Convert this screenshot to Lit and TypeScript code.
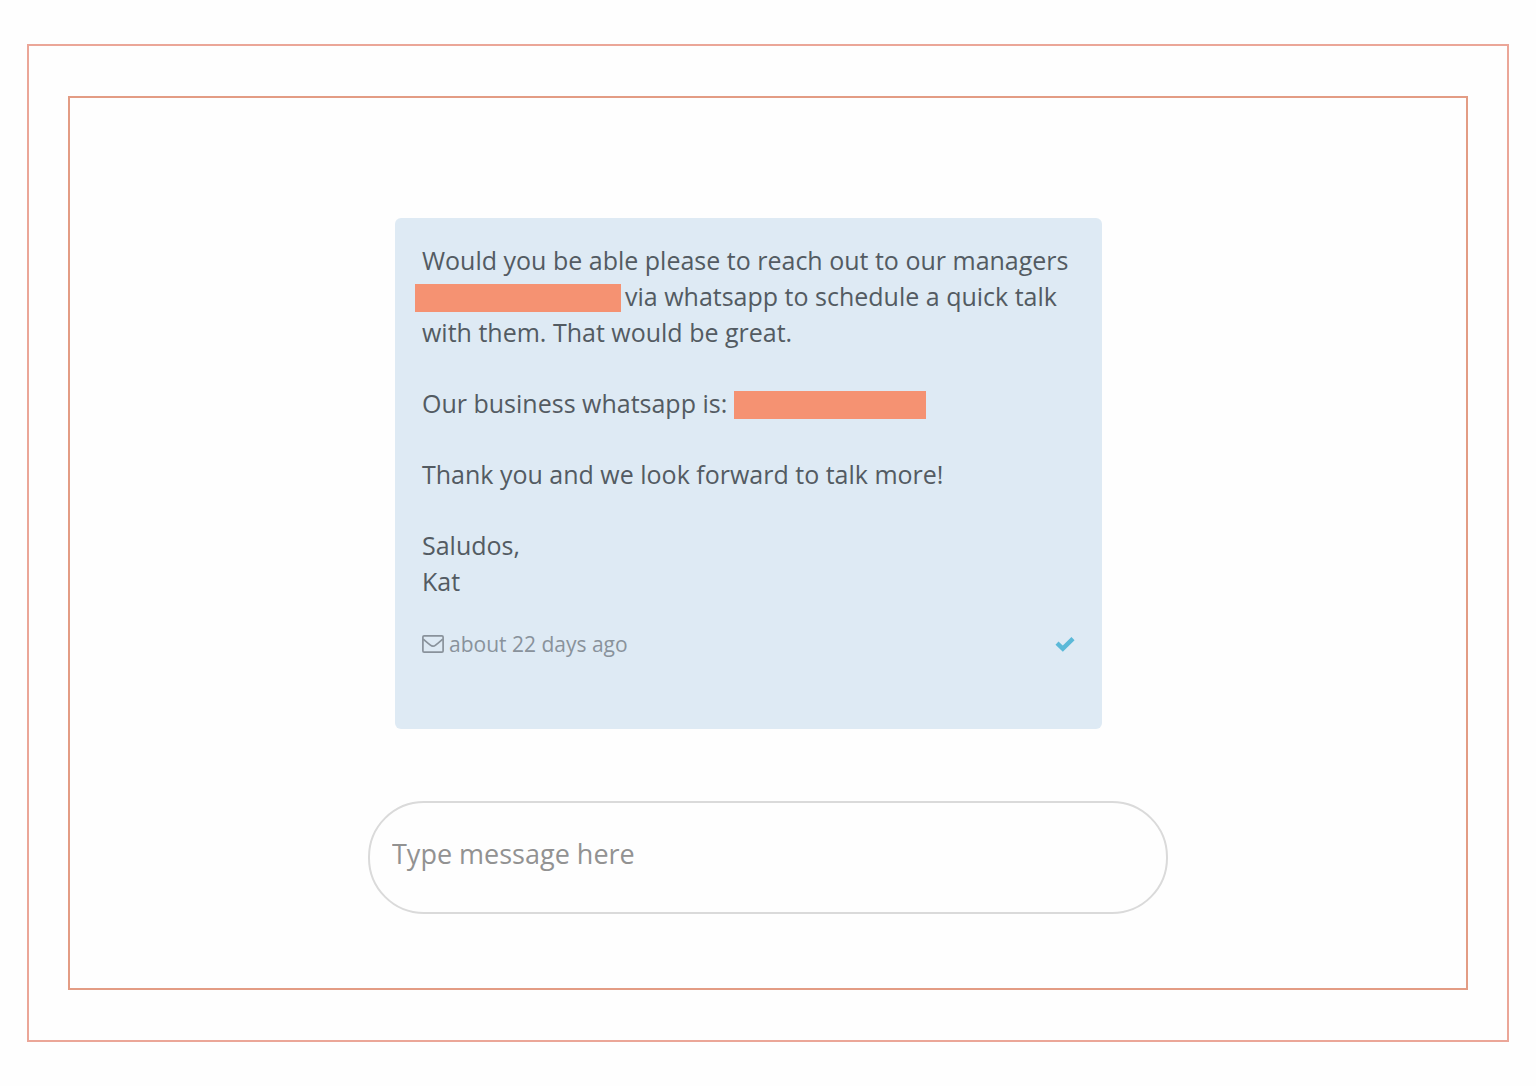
import { LitElement, html, css } from "lit";
import { customElement } from "lit/decorators.js";

@customElement("message-card")
class MessageCard extends LitElement {
  static styles = css`
    :host {
      display: block;
      box-sizing: border-box;
      padding: 24px 27px 69px;
      border-radius: 6px;
      background: #deeaf4;
      color: #535b62;
    }
    .text {
      margin: 0 0 29px;
      font-size: 25px;
      line-height: 36px;
    }
    .text p {
      margin: 0 0 35px;
    }
    .text p:last-child {
      margin-bottom: 0;
    }
    .redacted {
      display: inline-block;
      width: 192px;
      height: 28px;
      vertical-align: -6px;
      background: #f59272;
    }
    .names {
      width: 206px;
      margin: 0 4px 0 -7px;
    }
    .meta {
      display: flex;
      align-items: center;
      gap: 5px;
      font-size: 21px;
      line-height: 32px;
      color: #89929b;
    }
    .envelope {
      width: 22px;
      height: 18px;
    }
    .check {
      width: 20px;
      height: 16px;
      margin-left: auto;
    }
  `;

  render() {
    return html`
      <div class="text">
        <p>
          Would you be able please to reach out to our managers
          <span class="redacted names"></span>via whatsapp to schedule a quick
          talk with them. That would be great.
        </p>
        <p>Our business whatsapp is: <span class="redacted"></span></p>
        <p>Thank you and we look forward to talk more!</p>
        <p>Saludos,<br />Kat</p>
      </div>
      <div class="meta">
        <svg class="envelope" viewBox="0 0 22 18" fill="none" stroke="currentColor" stroke-width="1.7" stroke-linejoin="round" aria-hidden="true">
          <rect x="0.9" y="0.9" width="20.2" height="16.2" rx="1.2" />
          <path d="M1.2 4.2C3.6 6.4 6.2 8.3 8.4 10.1Q11 12.2 13.6 10.1C15.8 8.3 18.4 6.4 20.8 4.2" />
        </svg>
        <time>about 22 days ago</time>
        <svg class="check" viewBox="0 0 20 16" fill="none" stroke="#5bb9d8" stroke-width="4.4" aria-hidden="true">
          <path d="M2 7.2L7.8 12.6L18 2.6" />
        </svg>
      </div>
    `;
  }
}

@customElement("app-root")
class AppRoot extends LitElement {
  static styles = css`
    :host {
      display: flex;
      box-sizing: border-box;
      min-height: 100vh;
      padding: 44px 27px;
      background: #fefefe;
      font-family: "Open Sans", "Noto Sans", sans-serif;
    }
    .outer,
    .inner {
      display: flex;
      flex: 1;
      box-sizing: border-box;
      min-width: 0;
      border: 2px solid #eba698;
    }
    .outer {
      padding: 50px 39px;
    }
    .inner {
      justify-content: center;
      padding: 120px 24px 74px;
      border-color: #e39c84;
    }
    .chat {
      display: flex;
      flex-direction: column;
      gap: 72px;
      width: 100%;
      max-width: 800px;
    }
    .message {
      margin: 0 66px 0 27px;
    }
    .compose {
      box-sizing: border-box;
      width: 100%;
      height: 113px;
      padding: 0 22px 8px;
      border: 2px solid #dadada;
      border-radius: 56px;
      outline: none;
      background: transparent;
      color: #535b62;
      font-family: inherit;
      font-size: 27px;
    }
    .compose::placeholder {
      color: #929292;
      opacity: 1;
    }
  `;

  render() {
    return html`
      <div class="outer">
        <main class="inner">
          <div class="chat">
            <message-card class="message"></message-card>
            <input class="compose" type="text" placeholder="Type message here" aria-label="Type message here" />
          </div>
        </main>
      </div>
    `;
  }
}
